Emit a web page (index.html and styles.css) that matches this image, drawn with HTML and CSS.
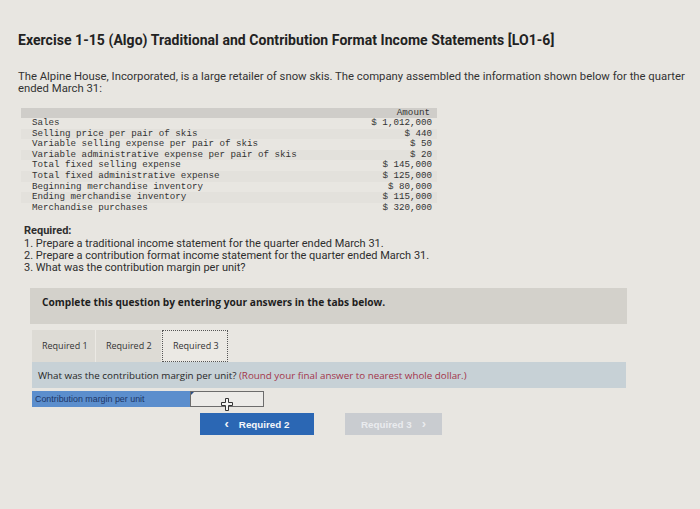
FILE: index.html
```html
<!DOCTYPE html>
<html>
<head>
<meta charset="utf-8">
<link rel="stylesheet" href="styles.css">
</head>
<body>
<div class="page">
  <h1 class="title">Exercise 1-15 (Algo) Traditional and Contribution Format Income Statements [LO1-6]</h1>
  <p class="intro">The Alpine House, Incorporated, is a large retailer of snow skis. The company assembled the information shown below for the quarter ended March 31:</p>

  <table class="data">
    <thead>
      <tr><th class="lbl"></th><th class="amt">Amount</th></tr>
    </thead>
    <tbody>
      <tr><td class="lbl">Sales</td><td class="amt">$ 1,012,000</td></tr>
      <tr class="alt"><td class="lbl">Selling price per pair of skis</td><td class="amt">$ 440</td></tr>
      <tr><td class="lbl">Variable selling expense per pair of skis</td><td class="amt">$ 50</td></tr>
      <tr class="alt"><td class="lbl">Variable administrative expense per pair of skis</td><td class="amt">$ 20</td></tr>
      <tr><td class="lbl">Total fixed selling expense</td><td class="amt">$ 145,000</td></tr>
      <tr class="alt"><td class="lbl">Total fixed administrative expense</td><td class="amt">$ 125,000</td></tr>
      <tr><td class="lbl">Beginning merchandise inventory</td><td class="amt">$ 80,000</td></tr>
      <tr class="alt"><td class="lbl">Ending merchandise inventory</td><td class="amt">$ 115,000</td></tr>
      <tr><td class="lbl">Merchandise purchases</td><td class="amt">$ 320,000</td></tr>
    </tbody>
  </table>

  <div class="required">
    <div class="req-head">Required:</div>
    <div>1. Prepare a traditional income statement for the quarter ended March 31.</div>
    <div>2. Prepare a contribution format income statement for the quarter ended March 31.</div>
    <div>3. What was the contribution margin per unit?</div>
  </div>

  <div class="notice">Complete this question by entering your answers in the tabs below.</div>

  <div class="tabs">
    <div class="tab">Required 1</div>
    <div class="tab">Required 2</div>
    <div class="tab active">Required 3</div>
  </div>
  <div class="question">What was the contribution margin per unit? <span class="hint">(Round your final answer to nearest whole dollar.)</span></div>

  <div class="answer">
    <div class="answer-label">Contribution margin per unit</div>
    <div class="answer-input">
      <span class="marker"></span>
      <svg class="cursor" width="12" height="13" viewBox="0 0 12 13">
        <path d="M4.5 0.5 H7.5 V4.5 H11.5 V7.5 H7.5 V12.5 H4.5 V7.5 H0.5 V4.5 H4.5 Z" fill="#f4f4f2" stroke="#333" stroke-width="1"/>
      </svg>
    </div>
  </div>

  <div class="nav">
    <div class="btn prev"><span class="chev">&lsaquo;</span>Required 2</div>
    <div class="btn next">Required 3<span class="chev">&rsaquo;</span></div>
  </div>
</div>
</body>
</html>
```

FILE: styles.css
```css
html, body {
  margin: 0;
  padding: 0;
}
body {
  background: #e8e6e1;
  width: 700px;
  height: 509px;
  overflow: hidden;
  color: #2a2a2a;
  font-family: Roboto, "Liberation Sans", sans-serif;
}
.page {
  padding: 32px 0 0 18px;
}
.title {
  margin: 0;
  font-size: 14px;
  line-height: 16px;
  font-weight: 700;
  letter-spacing: 0.05px;
  color: #222;
}
.intro {
  margin: 23px 0 0 0;
  width: 674px;
  font-size: 11.3px;
  line-height: 12px;
  color: #333;
}
.data {
  margin: 13px 0 0 3px;
  width: 416px;
  border-collapse: collapse;
  font-family: "Liberation Mono", monospace;
  font-size: 9.2px;
  color: #333;
}
.data th {
  background: #cfcdc9;
  height: 10px;
  padding: 0;
  font-weight: 400;
  line-height: 10px;
}
.data th.amt {
  text-align: center;
  padding-left: 40px;
}
.data td {
  padding: 0;
  height: 10.6px;
  line-height: 10.6px;
  white-space: pre;
}
.data td.lbl {
  padding-left: 11px;
}
.data td.amt {
  text-align: right;
  padding-right: 5px;
}
.data tr.alt td {
  background: #e3e1dc;
}
.required {
  margin: 12px 0 0 6px;
  font-size: 11px;
  line-height: 12px;
  color: #2e2e2e;
}
.req-head {
  font-weight: 700;
  margin-bottom: 1px;
}
.notice {
  margin: 14px 0 0 12px;
  width: 597px;
  height: 36px;
  box-sizing: border-box;
  padding: 8px 12px 0 12px;
  background: #d3d1cb;
  font-family: "Open Sans", sans-serif;
  font-weight: 700;
  font-size: 10.2px;
  line-height: 13px;
  color: #1e1e1e;
}
.tabs {
  display: flex;
  margin: 6px 0 0 14px;
  height: 32px;
}
.tab {
  box-sizing: border-box;
  width: 64px;
  height: 32px;
  padding-left: 10px;
  background: #dddbd5;
  border-right: 1px solid #ebe9e4;
  font-family: "Open Sans", sans-serif;
  font-size: 9px;
  line-height: 32px;
  color: #333;
}
.tab:nth-child(2) {
  width: 66px;
}
.tab.active {
  width: 66px;
  background: #ebe9e4;
  border: 1px dotted #555;
  line-height: 30px;
}
.question {
  margin-left: 14px;
  width: 594px;
  height: 26px;
  box-sizing: border-box;
  padding-left: 6px;
  background: #c7d1d6;
  font-family: "Open Sans", sans-serif;
  font-size: 9.8px;
  line-height: 27px;
  color: #262626;
}
.hint {
  color: #a3344a;
}
.answer {
  display: flex;
  margin: 3px 0 0 14px;
  height: 16px;
}
.answer-label {
  width: 158px;
  background: #5b8ecd;
  font-family: "Liberation Sans", sans-serif;
  font-size: 8.9px;
  line-height: 16px;
  color: #1b3566;
  padding-left: 3px;
  box-sizing: border-box;
}
.answer-input {
  position: relative;
  width: 74px;
  box-sizing: border-box;
  border: 1px solid #6c6c6c;
  background: #ecebe8;
}
.marker {
  position: absolute;
  left: 0;
  top: 0;
  width: 0;
  height: 0;
  border-top: 3px solid #2b4f86;
  border-right: 3px solid transparent;
}
.cursor {
  position: absolute;
  left: 30px;
  top: 6px;
}
.nav {
  display: flex;
  margin: 6px 0 0 182px;
  gap: 31px;
}
.btn {
  height: 22px;
  box-sizing: border-box;
  font-family: "Liberation Sans", sans-serif;
  font-weight: 700;
  font-size: 9.8px;
  line-height: 22px;
  text-align: center;
}
.btn.prev {
  width: 114px;
  background: #2b67b4;
  color: #f4f6fa;
}
.btn.prev .chev {
  font-size: 13px;
  margin-right: 10px;
}
.btn.next {
  width: 97px;
  background: #c9ccd0;
  color: #e9ebee;
}
.btn.next .chev {
  font-size: 13px;
  margin-left: 10px;
}
```
